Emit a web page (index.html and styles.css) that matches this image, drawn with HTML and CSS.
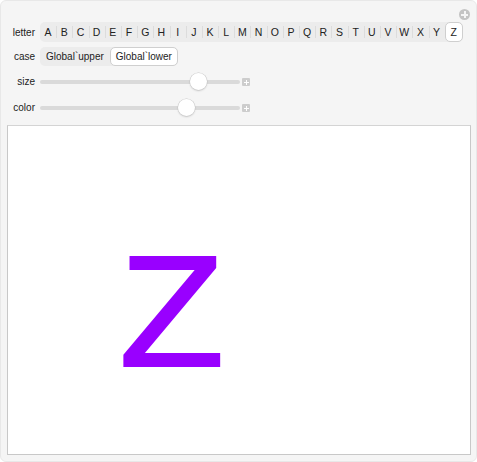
FILE: index.html
```html
<!DOCTYPE html>
<html>
<head>
<meta charset="utf-8">
<link rel="stylesheet" href="styles.css">
</head>
<body>
<div class="panel">
  <span class="add-icon"></span>
  <div class="controls">
    <div class="label">letter</div>
    <div class="seg letters">
      <span class="btn">A</span><span class="btn">B</span><span class="btn">C</span><span class="btn">D</span><span class="btn">E</span><span class="btn">F</span><span class="btn">G</span><span class="btn">H</span><span class="btn">I</span><span class="btn">J</span><span class="btn">K</span><span class="btn">L</span><span class="btn">M</span><span class="btn">N</span><span class="btn">O</span><span class="btn">P</span><span class="btn">Q</span><span class="btn">R</span><span class="btn">S</span><span class="btn">T</span><span class="btn">U</span><span class="btn">V</span><span class="btn">W</span><span class="btn">X</span><span class="btn">Y</span><span class="btn on">Z</span>
    </div>
    <div class="label">case</div>
    <div class="caserow">
      <div class="seg cases">
        <span class="btn wide">Global`upper</span><span class="btn wide on">Global`lower</span>
      </div>
    </div>
    <div class="label">size</div>
    <div class="sliderrow">
      <div class="track"><span class="thumb thumb-size"></span></div>
      <span class="plus"></span>
    </div>
    <div class="label">color</div>
    <div class="sliderrow">
      <div class="track"><span class="thumb thumb-color"></span></div>
      <span class="plus"></span>
    </div>
  </div>
  <div class="output">
    <div class="glyph">Z</div>
  </div>
</div>
</body>
</html>
```
FILE: styles.css
```css
html, body {
  margin: 0;
  padding: 0;
  background: #ffffff;
}
body {
  font-family: "Liberation Sans", Arial, sans-serif;
  font-size: 10px;
  color: #222;
}
.panel {
  position: relative;
  box-sizing: border-box;
  width: 477px;
  height: 462px;
  background: #f5f5f5;
  border: 1px solid #e8e8e8;
  border-radius: 6px;
  padding: 21px 0 0 0;
}
.add-icon {
  position: absolute;
  top: 8px;
  right: 6px;
  width: 11px;
  height: 11px;
  border-radius: 50%;
  background: #c4c4c4;
}
.add-icon::before, .add-icon::after {
  content: "";
  position: absolute;
  background: #f5f5f5;
}
.add-icon::before { left: 2px; top: 4.5px; width: 7px; height: 2px; }
.add-icon::after { left: 4.5px; top: 2px; width: 2px; height: 7px; }
.controls {
  display: grid;
  grid-template-columns: 34px auto;
  column-gap: 5px;
  row-gap: 5px;
  align-items: center;
  padding-right: 13px;
}
.label {
  text-align: right;
  font-size: 10px;
  color: #222;
}
.seg {
  display: flex;
  background: #ececec;
  border-radius: 5px;
  height: 20px;
  align-items: stretch;
  font-size: 10.5px;
}
.letters .btn {
  flex: 1 1 0;
  display: flex;
  align-items: center;
  justify-content: center;
  position: relative;
}
.letters .btn + .btn::before {
  content: "";
  position: absolute;
  left: 0;
  top: 4px;
  bottom: 4px;
  width: 1px;
  background: #dcdcdc;
}
.btn.on {
  background: #fff;
  border: 1px solid #cfcfcf;
  border-radius: 5px;
  box-sizing: border-box;
}
.letters .btn.on::before { display: none; }
.caserow { display: flex; }
.cases { height: 19px; font-size: 10px; }
.cases .btn {
  display: flex;
  align-items: center;
  padding: 0 6px;
}
.cases .btn.on { padding: 0 5px; }
.sliderrow {
  display: flex;
  align-items: center;
  height: 20px;
  margin-top: 1px;
}
.track {
  position: relative;
  width: 200px;
  height: 4px;
  background: #dadada;
  border-radius: 2px;
}
.thumb {
  position: absolute;
  top: -7px;
  width: 17px;
  height: 17px;
  border-radius: 50%;
  background: #fff;
  box-shadow: 0 0 0 0.5px #c8c8c8, 0 1px 2px rgba(0,0,0,0.18);
}
.thumb-size { left: 150px; }
.thumb-color { left: 138px; }
.plus {
  position: relative;
  width: 8px;
  height: 8px;
  margin-left: 2px;
  background: #cdcdcd;
  border-radius: 1px;
}
.plus::before, .plus::after {
  content: "";
  position: absolute;
  background: #fff;
}
.plus::before { left: 1.5px; top: 3.5px; width: 5px; height: 1px; }
.plus::after { left: 3.5px; top: 1.5px; width: 1px; height: 5px; }
.output {
  box-sizing: border-box;
  margin: 7px 0 0 6px;
  width: 464px;
  height: 330px;
  background: #fff;
  border: 1px solid #c8c8c8;
  border-top-color: #d4d4d4;
  padding: 107px 0 0 111px;
}
.glyph {
  display: inline-block;
  font-family: "Liberation Sans", Arial, sans-serif;
  font-size: 157px;
  line-height: 1;
  color: #9900ff;
  -webkit-text-stroke: 2px #9900ff;
  transform: scaleX(1.1);
  transform-origin: left top;
}
```
